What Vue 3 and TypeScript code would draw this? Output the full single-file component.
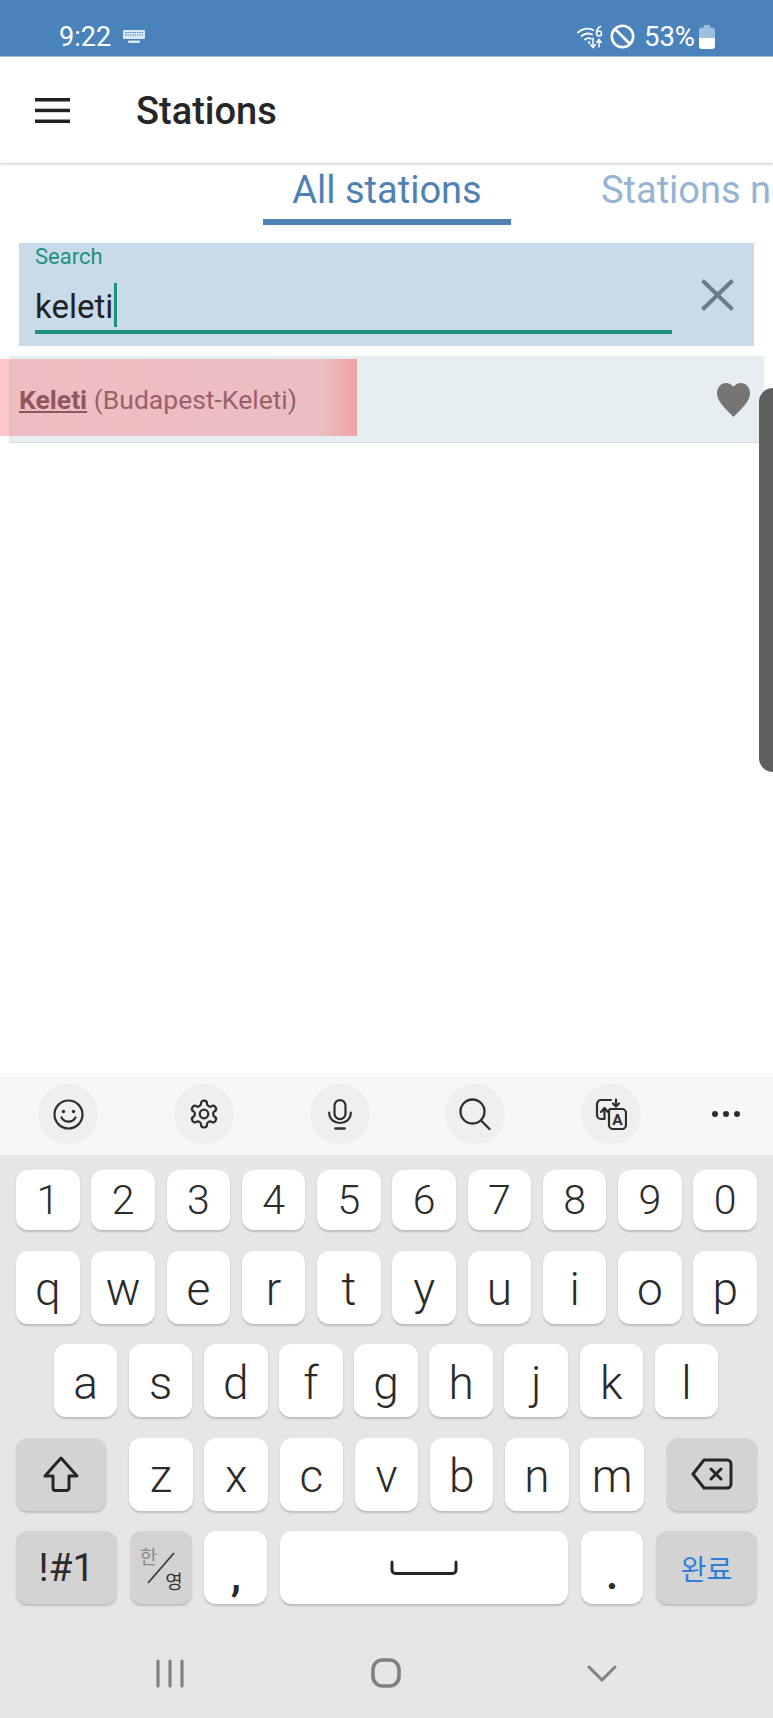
<script setup lang="ts">
const digits: string[] = ['1', '2', '3', '4', '5', '6', '7', '8', '9', '0']
const top: string[] = ['q', 'w', 'e', 'r', 't', 'y', 'u', 'i', 'o', 'p']
const mid: string[] = ['a', 's', 'd', 'f', 'g', 'h', 'j', 'k', 'l']
const low: string[] = ['z', 'x', 'c', 'v', 'b', 'n', 'm']
</script>

<template>
  <div class="phone">
    <div class="status">
      <div class="status-left">
        <span class="time">9:22</span>
        <svg class="kb-mini" width="22" height="14" viewBox="0 0 22 14">
          <rect x="0" y="0" width="22" height="9" rx="1" fill="#dbe7f3" />
          <path d="M2 2.500h18M2 5h18" stroke="#4a82bc" stroke-width="1" stroke-dasharray="1.400 1" />
          <rect x="5" y="10.500" width="12" height="2.500" rx="1" fill="#dbe7f3" />
        </svg>
      </div>
      <div class="status-right">
        <svg width="27" height="25" viewBox="0 0 27 25" fill="none" stroke="#fff" stroke-linecap="round">
          <path d="M1 8.500C5 4.500 11 3.500 16 6" stroke-width="1.800" />
          <path d="M4.500 12c3-2.600 7-3 10.500-1.500" stroke-width="1.800" />
          <path d="M8 15.500c2-1.500 4-1.700 6-.8" stroke-width="1.800" />
          <circle cx="12" cy="18.500" r="1.200" fill="#fff" stroke="none" />
          <path d="M16 14v9M13.500 20.500l2.500 3 2.500-3" stroke-width="1.500" />
          <path d="M22 23v-7M19.800 18.500l2.200-3 2.200 3" stroke-width="1.500" />
          <circle cx="22" cy="9.500" r="2.500" stroke-width="1.500" />
          <path d="M19.500 9.500C19.500 6 21 3.500 23.500 2.500" stroke-width="1.500" />
        </svg>
        <svg class="block-ic" width="25" height="25" viewBox="0 0 25 25" fill="none" stroke="#fff" stroke-width="2.600">
          <circle cx="12.500" cy="12.500" r="10.700" />
          <path d="M5 5l15 15" />
        </svg>
        <span class="pct">53%</span>
        <svg class="batt" width="16" height="24" viewBox="0 0 16 24">
          <path d="M5 0h6v2.500h2a3 3 0 0 1 3 3V13H0V5.500a3 3 0 0 1 3-3h2z" fill="#9dbfe0" />
          <path d="M0 13h16v8a3 3 0 0 1-3 3H3a3 3 0 0 1-3-3z" fill="#fff" />
        </svg>
      </div>
    </div>

    <header class="appbar">
      <svg width="35" height="25" viewBox="0 0 35 25" fill="#222">
        <rect x="0" y="0" width="35" height="3.500" />
        <rect x="0" y="10.700" width="35" height="3.500" />
        <rect x="0" y="21.500" width="35" height="3.500" />
      </svg>
      <h1 class="title">Stations</h1>
    </header>

    <main class="content">
      <nav class="tabs">
        <div class="tab active">All stations</div>
        <div class="tab next">Stations near me</div>
      </nav>

      <div class="search">
        <div class="field">
          <div class="label">Search</div>
          <div class="value"><span class="typed">keleti</span><span class="caret"></span></div>
        </div>
        <svg class="clear" width="33" height="32" viewBox="0 0 33 32" stroke="#6f7b84" stroke-width="4" fill="none">
          <path d="M1.500 1.500l30 29M31.500 1.500l-30 29" />
        </svg>
      </div>

      <div class="result">
        <div class="result-text"><b>Keleti</b> (Budapest-Keleti)</div>
        <svg class="heart" width="33" height="34" viewBox="2 3 20 18.350" preserveAspectRatio="none">
          <path fill="#757575" d="M12 21.350l-1.450-1.320C5.400 15.360 2 12.280 2 8.500 2 5.420 4.420 3 7.500 3c1.740 0 3.410.81 4.500 2.090C13.090 3.810 14.760 3 16.500 3 19.580 3 22 5.420 22 8.500c0 3.780-3.400 6.860-8.550 11.540L12 21.350z" />
        </svg>
        <div class="highlight"></div>
      </div>
      <div class="scroll-handle"></div>
    </main>

    <section class="keyboard">
      <div class="toolbar">
        <div class="tool">
          <svg width="31" height="31" viewBox="0 0 31 31" fill="none" stroke="#2e2e2e" stroke-width="2.200" stroke-linecap="round">
            <circle cx="15.500" cy="15.500" r="14" />
            <circle cx="10.500" cy="12.500" r="1.700" fill="#2e2e2e" stroke="none" />
            <circle cx="20.500" cy="12.500" r="1.700" fill="#2e2e2e" stroke="none" />
            <path d="M8.500 18.500c3 5.500 11 5.500 14 0" />
          </svg>
        </div>
        <div class="tool">
          <svg width="32" height="32" viewBox="0 0 24 24" fill="none" stroke="#2e2e2e" stroke-width="1.700">
            <path d="M12.220 2h-.44a2 2 0 0 0-2 2v.18a2 2 0 0 1-1 1.730l-.43.250a2 2 0 0 1-2 0l-.15-.08a2 2 0 0 0-2.730.730l-.22.380a2 2 0 0 0 .73 2.730l.15.100a2 2 0 0 1 1 1.720v.510a2 2 0 0 1-1 1.740l-.15.090a2 2 0 0 0-.73 2.730l.22.380a2 2 0 0 0 2.730.730l.15-.08a2 2 0 0 1 2 0l.43.250a2 2 0 0 1 1 1.730V20a2 2 0 0 0 2 2h.44a2 2 0 0 0 2-2v-.18a2 2 0 0 1 1-1.730l.43-.25a2 2 0 0 1 2 0l.15.08a2 2 0 0 0 2.730-.73l.22-.39a2 2 0 0 0-.73-2.730l-.15-.08a2 2 0 0 1-1-1.740v-.5a2 2 0 0 1 1-1.740l.15-.09a2 2 0 0 0 .73-2.730l-.22-.38a2 2 0 0 0-2.730-.73l-.15.08a2 2 0 0 1-2 0l-.43-.25a2 2 0 0 1-1-1.730V4a2 2 0 0 0-2-2z" />
            <circle cx="12" cy="12" r="3.200" />
          </svg>
        </div>
        <div class="tool">
          <svg width="24" height="31" viewBox="0 0 24 31" fill="none" stroke="#2e2e2e" stroke-width="2.200" stroke-linecap="round">
            <rect x="6.500" y="1.100" width="11" height="19" rx="5.500" />
            <path d="M1.200 13.500c0 14 21.600 14 21.600 0" />
            <path d="M7.500 29.500h9" stroke-width="2.600" />
          </svg>
        </div>
        <div class="tool">
          <svg width="32" height="32" viewBox="0 0 32 32" fill="none" stroke="#2e2e2e" stroke-width="2.300" stroke-linecap="round">
            <circle cx="13.500" cy="13.500" r="12" />
            <path d="M22 22.500l8.500 8.500" />
          </svg>
        </div>
        <div class="tool">
          <svg width="32" height="32" viewBox="0 0 32 32" fill="none" stroke="#2e2e2e" stroke-width="2.200" stroke-linecap="round" stroke-linejoin="round">
            <path d="M16 2H6a4 4 0 0 0-4 4v11a4 4 0 0 0 4 4h3" />
            <path d="M9.500 21v-10M6 14l3.500-4 3.500 4" />
            <path d="M21 1.500v6.500M18 5.500l3 3 3-3" />
            <path d="M16 11h11a4 4 0 0 1 4 4v12a4 4 0 0 1-4 4H18a4 4 0 0 1-4-4V13a2 2 0 0 1 2-2z" />
            <text x="22.500" y="27" font-family="Roboto, sans-serif" font-size="15.500" font-weight="700" fill="#2e2e2e" stroke="none" text-anchor="middle">A</text>
          </svg>
        </div>
        <div class="tool plain">
          <span class="dot"></span><span class="dot"></span><span class="dot"></span>
        </div>
      </div>

      <div class="keys">
        <div class="row digits">
          <div v-for="d in digits" :key="d" class="key digit">{{ d }}</div>
        </div>
        <div class="row">
          <div v-for="k in top" :key="k" class="key letter">{{ k }}</div>
        </div>
        <div class="row inset">
          <div v-for="k in mid" :key="k" class="key letter">{{ k }}</div>
        </div>
        <div class="row">
          <div class="key func shift">
            <svg width="36" height="36" viewBox="0 0 36 36" fill="none" stroke="#262626" stroke-width="3" stroke-linejoin="round">
              <path d="M18 2l16 18H26v12a2.500 2.500 0 0 1-2.500 2.500h-11A2.500 2.500 0 0 1 10 32V20H2z" />
            </svg>
          </div>
          <div class="low">
            <div v-for="k in low" :key="k" class="key letter">{{ k }}</div>
          </div>
          <div class="key func shift">
            <svg width="42" height="32" viewBox="0 0 42 32" fill="none" stroke="#262626" stroke-width="3" stroke-linejoin="round" stroke-linecap="round">
              <path d="M13 2h23a4 4 0 0 1 4 4v20a4 4 0 0 1-4 4H13L2 16z" />
              <path d="M20 11l10 10M30 11L20 21" />
            </svg>
          </div>
        </div>
        <div class="row last">
          <div class="key func sym">!#1</div>
          <div class="key func lang">
            <span class="han">한</span>
            <svg width="28" height="32" viewBox="0 0 28 32" stroke="#3a3a3a" stroke-width="1.800">
              <path d="M27 1L1 31" />
            </svg>
            <span class="yeong">영</span>
          </div>
          <div class="key punct comma">,</div>
          <div class="key space">
            <svg width="68" height="15" viewBox="0 0 68 15" fill="none" stroke="#262626" stroke-width="3" stroke-linecap="round">
              <path d="M2 2v8a3.500 3.500 0 0 0 3.500 3.500h57A3.500 3.500 0 0 0 66 10V2" />
            </svg>
          </div>
          <div class="key punct dotk">.</div>
          <div class="key func done">완료</div>
        </div>
      </div>

      <div class="navbar">
        <svg width="28" height="29" viewBox="0 0 28 29" stroke="#808080" stroke-width="3.200" stroke-linecap="round">
          <path d="M2 2v25M14 2v25M26 2v25" />
        </svg>
        <svg width="30" height="30" viewBox="0 0 30 30" fill="none" stroke="#808080" stroke-width="3.600">
          <rect x="2" y="2" width="26" height="26" rx="9.500" />
        </svg>
        <svg width="30" height="17" viewBox="0 0 30 17" fill="none" stroke="#808080" stroke-width="3" stroke-linecap="round" stroke-linejoin="round">
          <path d="M2 2l13 13L28 2" />
        </svg>
      </div>
    </section>
  </div>
</template>

<style>
html, body { margin: 0; background: #fff; }
</style>

<style scoped>
.phone {
  width: 773px;
  height: 1718px;
  display: flex;
  flex-direction: column;
  overflow: hidden;
  font-family: Roboto, "Noto Sans CJK KR", sans-serif;
  background: #fff;
}
.status {
  height: 57px;
  box-sizing: border-box;
  flex: none;
  display: flex;
  align-items: center;
  justify-content: space-between;
  padding: 17px 58px 0 59px;
  background: #4a82bc;
  border-bottom: 1px solid #a5c3de;
  color: #fff;
}
.status-left, .status-right { display: flex; align-items: center; }
.time { font-size: 27px; }
.kb-mini { margin-left: 12px; }
.block-ic { margin-left: 6px; }
.pct { font-size: 27.500px; margin-left: 9px; }
.batt { margin-left: 4px; }
.appbar {
  position: relative;
  z-index: 2;
  flex: none;
  height: 106px;
  box-sizing: border-box;
  display: flex;
  align-items: center;
  padding-left: 35px;
  background: #fff;
  box-shadow: 0 1px 3px rgba(0, 0, 0, 0.22);
}
.title {
  margin: 2px 0 0 66px;
  font-size: 38px;
  font-weight: 500;
  color: #262626;
}
.content { position: relative; flex: 1; min-height: 0; }
.tabs {
  display: flex;
  height: 62px;
  padding-left: 263px;
  white-space: nowrap;
  overflow: hidden;
}
.tab {
  flex: none;
  box-sizing: border-box;
  font-size: 38px;
  line-height: 54px;
  height: 62px;
}
.active {
  width: 248px;
  text-align: center;
  color: #4f82b4;
  border-bottom: 6px solid #4f82b4;
}
.next { margin-left: 90px; color: #93b4d4; }
.search {
  margin: 18px 19px 0;
  height: 103px;
  display: flex;
  align-items: flex-start;
  padding-left: 16px;
  background: #c9dbe8;
}
.field {
  width: 637px;
  height: 91px;
  box-sizing: border-box;
  border-bottom: 4px solid #1f9080;
}
.label {
  font-size: 22px;
  line-height: 26px;
  margin-top: 1px;
  color: #1f9080;
}
.value {
  display: flex;
  align-items: flex-start;
  margin-top: 13px;
  color: #1d2327;
}
.typed {
  font-size: 33px;
  line-height: 48px;
}
.caret {
  width: 3px;
  height: 44px;
  margin-left: 1px;
  background: #1f9080;
}
.clear { margin: 36px 0 0 29px; }
.result {
  position: relative;
  margin: 10px 9px 0;
  height: 87px;
  box-sizing: border-box;
  display: flex;
  align-items: center;
  justify-content: space-between;
  padding: 0 14px 0 10px;
  background: #e6eef1;
  border-bottom: 1px solid #d7dcde;
}
.result-text {
  font-size: 26.500px;
  color: #5a505d;
}
.result-text b {
  font-weight: 700;
  text-decoration: underline;
  color: #463c46;
}
.heart { margin-top: 2px; }
.highlight {
  position: absolute;
  left: -9px;
  top: 3px;
  width: 357px;
  height: 77px;
  background: linear-gradient(90deg, rgba(250, 120, 125, 0.42) 0, rgba(245, 120, 125, 0.4) 90%, rgba(245, 105, 110, 0.58) 100%);
}
.scroll-handle {
  position: absolute;
  right: 0;
  top: 225px;
  width: 14px;
  height: 384px;
  background: #5f5f5f;
  border-radius: 14px 0 0 14px;
}
.keyboard {
  flex: none;
  height: 645px;
  display: flex;
  flex-direction: column;
  background: #e6e6e6;
}
.toolbar {
  height: 82px;
  flex: none;
  display: flex;
  align-items: center;
  gap: 75.800px;
  padding-left: 38px;
  background: #f7f7f7;
}
.tool {
  width: 60px;
  height: 60px;
  flex: none;
  display: flex;
  align-items: center;
  justify-content: center;
  border-radius: 50%;
  background: #efefef;
}
.tool.plain {
  margin-left: -20.800px;
  gap: 5px;
  background: none;
}
.dot {
  width: 6px;
  height: 6px;
  border-radius: 50%;
  background: #2e2e2e;
}
.keys {
  display: flex;
  flex-direction: column;
  gap: 20.500px;
  padding: 15px 16px 0;
}
.row {
  display: flex;
  gap: 11.700px;
  height: 73px;
}
.row.digits { height: 60px; }
.row.inset { padding: 0 39px 0 38px; }
.row.last { gap: 12.700px; }
.low {
  flex: 1;
  display: flex;
  gap: 11.700px;
  margin: 0 11.500px;
}
.key {
  flex: 1 1 0;
  min-width: 0;
  display: flex;
  align-items: center;
  justify-content: center;
  box-sizing: border-box;
  background: #fff;
  border-radius: 12px;
  box-shadow: 0 1.500px 2px rgba(0, 0, 0, 0.18);
  color: #2b2b2b;
}
.digit { font-size: 41px; font-weight: 350; }
.letter { font-size: 46px; font-weight: 350; padding-top: 4px; }
.func { background: #d3d3d3; }
.shift { flex: 0 0 90px; }
.sym { flex: 0 0 101px; font-size: 39px; }
.lang { position: relative; flex: 0 0 62px; }
.han {
  position: absolute;
  left: 10px;
  top: 11px;
  font-size: 19px;
  color: #8a8a8a;
}
.yeong {
  position: absolute;
  right: 9px;
  bottom: 10px;
  font-size: 19px;
  color: #333;
}
.punct {
  flex: 0 0 62.500px;
  font-size: 46px;
  font-weight: 500;
  line-height: 1;
}
.comma { flex-basis: 63px; padding-top: 13px; }
.dotk { padding-top: 10px; }
.space { flex: 1 1 0; }
.done {
  flex: 0 0 101px;
  font-size: 28px;
  color: #2f7fd6;
}
.navbar {
  flex: 1;
  display: flex;
  align-items: center;
  padding: 24px 156px 0;
  justify-content: space-between;
}
</style>
